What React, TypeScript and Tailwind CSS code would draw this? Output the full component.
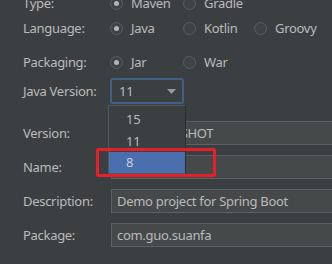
import React from "react";

const font = { fontFamily: '"Noto Sans", "Noto Sans CJK SC", sans-serif' };

function Radio({ checked, label }: { checked?: boolean; label: string }) {
  return (
    <div className="flex items-center gap-[8px]">
      <div className="w-[13px] h-[13px] rounded-full border border-[#5b5e60] bg-[#3f4345] flex items-center justify-center shrink-0">
        {checked && <div className="w-[5px] h-[5px] rounded-full bg-[#b4b4b4]" />}
      </div>
      <span>{label}</span>
    </div>
  );
}

function Field({ value }: { value: string }) {
  return (
    <div className="h-[24px] ml-[1px] w-[260px] shrink-0 bg-[#45494a] border border-[#5e6163] flex items-center pl-[5px]">
      {value}
    </div>
  );
}

function Label({ text }: { text: string }) {
  return <div className="w-[87px] shrink-0">{text}</div>;
}

export default function App() {
  return (
    <div
      className="relative w-[332px] h-[264px] overflow-hidden bg-[#3c3f41] text-[#bbbbbb] text-[13px] leading-none tracking-[-0.3px]"
      style={font}
    >
      <div className="flex flex-col pl-[23px] mt-[-10px]">
        <div className="flex items-center h-[26px]">
          <Label text="Type:" />
          <div className="flex">
            <div className="w-[73px]"><Radio checked label="Maven" /></div>
            <Radio label="Gradle" />
          </div>
        </div>
        <div className="flex items-center h-[24px]">
          <Label text="Language:" />
          <div className="flex">
            <div className="w-[73px]"><Radio checked label="Java" /></div>
            <div className="w-[71px]"><Radio label="Kotlin" /></div>
            <Radio label="Groovy" />
          </div>
        </div>
        <div className="flex items-center h-[24px] mt-[10px]">
          <Label text="Packaging:" />
          <div className="flex">
            <div className="w-[73px]"><Radio checked label="Jar" /></div>
            <Radio label="War" />
          </div>
        </div>
        <div className="flex items-center h-[26px] mt-[4px]">
          <Label text="Java Version:" />
          <div className="w-[74px] h-[26px] shrink-0 rounded-[3px] border-2 border-[#3d6185] bg-[#3c3f41] flex items-center justify-between pl-[7px] pr-[6px]">
            <span>11</span>
            <svg width="9" height="5" viewBox="0 0 9 5">
              <path d="M0 0 L9 0 L4.5 5 Z" fill="#9a9a9a" />
            </svg>
          </div>
        </div>
        <div className="flex items-center h-[24px] mt-[17px]">
          <Label text="Version:" />
          <Field value="0.0.1-SNAPSHOT" />
        </div>
        <div className="flex items-center h-[24px] mt-[10px]">
          <Label text="Name:" />
          <Field value="demo" />
        </div>
        <div className="flex items-center h-[24px] mt-[10px]">
          <Label text="Description:" />
          <Field value="Demo project for Spring Boot" />
        </div>
        <div className="flex items-center h-[24px] mt-[10px]">
          <Label text="Package:" />
          <Field value="com.guo.suanfa" />
        </div>
      </div>

      {/* dropdown popup */}
      <div className="absolute left-[108px] top-[105px] w-[78px] bg-[#3c3f41] border border-[#515658] border-r-[#2b2d2e] pt-[2px] flex flex-col">
        <div className="h-[22px] flex items-center pl-[17px]">15</div>
        <div className="h-[22px] flex items-center pl-[17px]">11</div>
        <div className="h-[21px] flex items-center pl-[17px] bg-[#4b6eaf] text-[#c8cdd6]">8</div>
      </div>

      {/* red annotation */}
      <div className="absolute left-[96px] top-[148px] w-[120px] h-[29px] border-[3px] border-[#e4212b] rounded-[2px]" />
    </div>
  );
}
